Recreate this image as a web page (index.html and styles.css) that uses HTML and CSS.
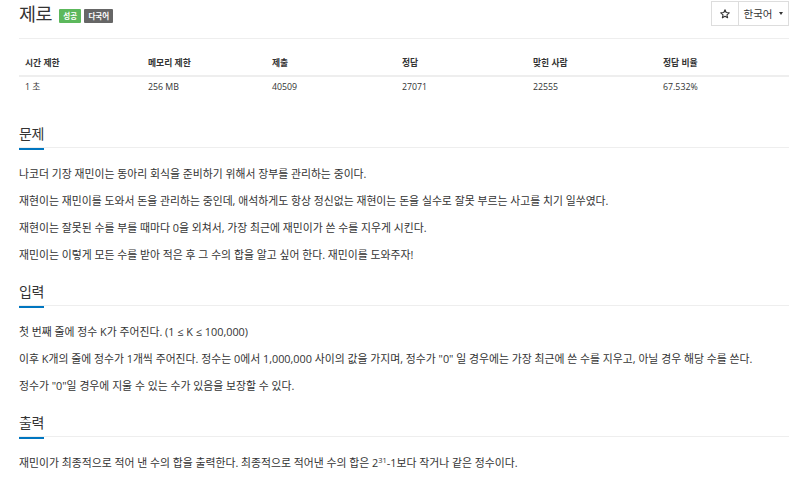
FILE: index.html
```html
<!DOCTYPE html>
<html lang="ko">
<head>
<meta charset="utf-8">
<link rel="stylesheet" href="styles.css">
</head>
<body>
<div class="page">
  <div class="top">
    <h1 class="title">제로 <span class="badge badge-ok">성공</span><span class="badge badge-lang">다국어</span></h1>
    <div class="btn-group">
      <span class="btn btn-star"><svg width="10" height="10" viewBox="0 0 20 20"><path d="M10 1.5l2.4 5.6 6.1.5-4.6 4 1.4 6-5.3-3.2-5.3 3.2 1.4-6-4.6-4 6.1-.5z" fill="none" stroke="#333" stroke-width="2.2" stroke-linejoin="round"/></svg></span>
      <span class="btn btn-lang">한국어 <span class="caret"></span></span>
    </div>
  </div>

  <table class="info">
    <thead>
      <tr><th>시간 제한</th><th>메모리 제한</th><th>제출</th><th>정답</th><th>맞힌 사람</th><th>정답 비율</th></tr>
    </thead>
    <tbody>
      <tr><td>1 초</td><td>256 MB</td><td>40509</td><td>27071</td><td>22555</td><td>67.532%</td></tr>
    </tbody>
  </table>

  <section class="sec">
    <div class="headline"><h2>문제</h2></div>
    <div class="body">
      <p>나코더 기장 재민이는 동아리 회식을 준비하기 위해서 장부를 관리하는 중이다.</p>
      <p>재현이는 재민이를 도와서 돈을 관리하는 중인데, 애석하게도 항상 정신없는 재현이는 돈을 실수로 잘못 부르는 사고를 치기 일쑤였다.</p>
      <p>재현이는 잘못된 수를 부를 때마다 0을 외쳐서, 가장 최근에 재민이가 쓴 수를 지우게 시킨다.</p>
      <p>재민이는 이렇게 모든 수를 받아 적은 후 그 수의 합을 알고 싶어 한다. 재민이를 도와주자!</p>
    </div>
  </section>

  <section class="sec">
    <div class="headline"><h2>입력</h2></div>
    <div class="body">
      <p>첫 번째 줄에 정수 K가 주어진다. (1 ≤ K ≤ 100,000)</p>
      <p>이후 K개의 줄에 정수가 1개씩 주어진다. 정수는 0에서 1,000,000 사이의 값을 가지며, 정수가 "0" 일 경우에는 가장 최근에 쓴 수를 지우고, 아닐 경우 해당 수를 쓴다.</p>
      <p>정수가 "0"일 경우에 지울 수 있는 수가 있음을 보장할 수 있다.</p>
    </div>
  </section>

  <section class="sec">
    <div class="headline"><h2>출력</h2></div>
    <div class="body">
      <p>재민이가 최종적으로 적어 낸 수의 합을 출력한다. 최종적으로 적어낸 수의 합은 2<sup>31</sup>-1보다 작거나 같은 정수이다.</p>
    </div>
  </section>
</div>
</body>
</html>
```

FILE: styles.css
```css
html, body {
  margin: 0;
  padding: 0;
  background: #fff;
}
body {
  font-family: "Open Sans", "Noto Sans CJK KR", sans-serif;
  color: #333;
}
.page {
  padding: 0 11px 0 19px;
}
.top {
  display: flex;
  justify-content: space-between;
  align-items: flex-start;
  height: 38px;
  border-bottom: 1px solid #eee;
}
.title {
  margin: 0;
  font-size: 18.5px;
  font-weight: normal;
  line-height: 28px;
  letter-spacing: -0.4px;
  display: flex;
  align-items: center;
}
.badge {
  display: inline-flex;
  align-items: center;
  justify-content: center;
  height: 14px;
  margin-top: 4px;
  font-size: 7.5px;
  font-weight: bold;
  color: #fff;
  letter-spacing: 0;
  border-radius: 1px;
}
.badge-ok {
  background: #5cb85c;
  width: 22px;
  margin-left: 7px;
}
.badge-lang {
  background: #666;
  width: 29px;
  margin-left: 3px;
}
.btn-group {
  display: flex;
  margin-top: 1px;
}
.btn {
  display: flex;
  align-items: center;
  justify-content: center;
  height: 23px;
  border: 1px solid #ddd;
  font-size: 10.5px;
  color: #333;
  background: #fff;
}
.btn-star {
  width: 26px;
}
.btn-lang {
  width: 49px;
  border-left: none;
  gap: 7px;
}
.caret {
  width: 0;
  height: 0;
  border-left: 2.5px solid transparent;
  border-right: 2.5px solid transparent;
  border-top: 3px solid #333;
}
.info {
  width: 100%;
  border-collapse: collapse;
  margin-bottom: 25px;
  font-size: 8.8px;
}
.info th, .info td {
  text-align: left;
  padding: 0 6px;
  line-height: 12px;
}
.info th {
  font-weight: bold;
  padding-top: 18px;
  padding-bottom: 6px;
  border-bottom: 2px solid #eee;
}
.info td {
  padding-top: 4px;
  padding-bottom: 4px;
}
.info th:nth-child(1) { width: 111px; }
.info th:nth-child(2) { width: 112px; }
.info th:nth-child(3) { width: 118px; }
.info th:nth-child(4) { width: 119px; }
.info th:nth-child(5) { width: 118px; }
.sec {
  display: flow-root;
  margin-bottom: 6px;
}
.headline {
  border-bottom: 1px solid #eee;
  height: 25px;
}
.headline h2 {
  display: inline-block;
  margin: 0;
  font-size: 14px;
  font-weight: normal;
  line-height: 20px;
  padding-bottom: 4px;
  border-bottom: 2px solid #0076c0;
  letter-spacing: -0.3px;
}
.body {
  padding-top: 18px;
}
.body p {
  margin: 0 0 12px;
  font-size: 10.85px;
  line-height: 15px;
}
sup {
  font-size: 7.5px;
  line-height: 0;
  vertical-align: 4px;
}
```
